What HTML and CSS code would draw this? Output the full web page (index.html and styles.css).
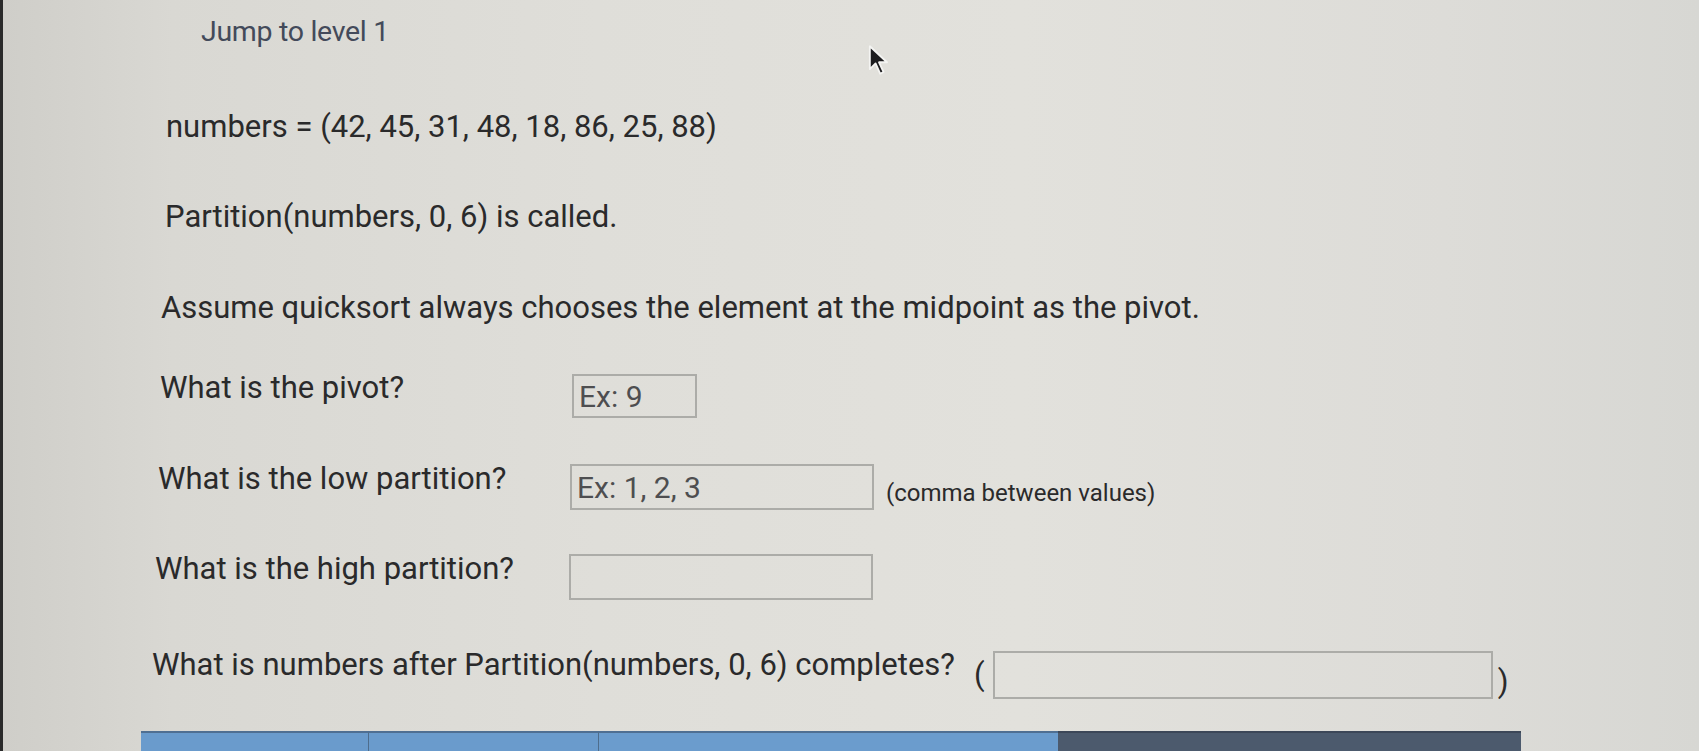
FILE: index.html
```html
<!DOCTYPE html>
<html lang="en">
<head>
<meta charset="utf-8">
<title>Partition</title>
<link rel="stylesheet" href="styles.css">
</head>
<body>
<div class="screen">
  <div class="content">
    <div class="jump">Jump to level 1</div>
    <p class="line l-numbers">numbers = (42, 45, 31, 48, 18, 86, 25, 88)</p>
    <p class="line l-call">Partition(numbers, 0, 6) is called.</p>
    <p class="line l-assume">Assume quicksort always chooses the element at the midpoint as the pivot.</p>

    <div class="q q-pivot">
      <span class="label">What is the pivot?</span>
      <input class="box box-small" type="text" placeholder="Ex: 9">
    </div>
    <div class="q q-low">
      <span class="label">What is the low partition?</span>
      <input class="box box-mid" type="text" placeholder="Ex: 1, 2, 3">
      <span class="hint">(comma between values)</span>
    </div>
    <div class="q q-high">
      <span class="label">What is the high partition?</span>
      <input class="box box-mid" type="text">
    </div>
    <div class="q q-after">
      <span class="label label-wide">What is numbers after Partition(numbers, 0, 6) completes?</span>
      <span class="paren paren-open">(</span>
      <input class="box box-wide" type="text">
      <span class="paren paren-close">)</span>
    </div>
  </div>

  <div class="bar">
    <div class="seg seg-a"></div>
    <div class="seg seg-b"></div>
    <div class="seg seg-c"></div>
    <div class="seg seg-d"></div>
  </div>

  <svg class="cursor" width="24" height="32" viewBox="0 0 20 28">
    <path d="M2 2 L2 22 L7 17 L11 26 L14 24.5 L10 16 L17 16 Z" fill="#1c1c1e" stroke="#f4f4f2" stroke-width="1.6" stroke-linejoin="round"/>
  </svg>
</div>
</body>
</html>
```

FILE: styles.css
```css
* { box-sizing: border-box; }

html, body {
  margin: 0;
  padding: 0;
  width: 1699px;
  height: 751px;
  overflow: hidden;
}

body {
  font-family: Roboto, "Liberation Sans", sans-serif;
  color: #2a2a2b;
}

.screen {
  position: relative;
  width: 1699px;
  height: 751px;
  overflow: hidden;
  background: linear-gradient(90deg, #cfcec9 0%, #d9d8d3 10%, #dfded9 35%, #e2e1dc 60%, #dddcd8 85%, #d7d7d3 100%);
  border-left: 3px solid #2a2a2a;
  display: flex;
  flex-direction: column;
}

.content {
  display: flex;
  flex-direction: column;
  padding-left: 157px;
  padding-top: 12px;
}

.jump {
  height: 40px;
  line-height: 40px;
  font-size: 28.5px;
  color: #434a5a;
  padding-left: 41px;
  letter-spacing: -0.3px;
}

.line {
  margin: 0;
  height: 40px;
  line-height: 40px;
  font-size: 31px;
}

.l-numbers { margin-top: 55px; padding-left: 6px; }
.l-call    { margin-top: 50px; padding-left: 5px; }
.l-assume  { margin-top: 51px; padding-left: 1px; }

.q {
  display: flex;
  align-items: center;
  height: 46px;
  font-size: 31px;
}

.q-pivot { margin-top: 45px; }
.q-low   { margin-top: 45px; margin-left: -2px; }
.q-high  { margin-top: 44px; margin-left: -5px; }
.q-after { margin-top: 50px; margin-left: -8px; height: 50px; }

.label {
  width: 412px;
  flex: none;
  line-height: 40px;
  margin-bottom: 16px;
}

.q-high .label { width: 414px; }

.label-wide {
  width: auto;
  margin-bottom: 20px;
}

.box {
  flex: none;
  height: 44px;
  border: 2px solid #acaca8;
  background: transparent;
  font-family: Roboto, "Liberation Sans", sans-serif;
  font-size: 30px;
  padding: 0 5px;
  color: #333;
  outline: none;
}

.box::placeholder { color: #4e4e50; opacity: 1; }

.box-small { width: 125px; }
.box-mid   { width: 304px; height: 46px; }
.box-wide  { width: 500px; height: 48px; }

.hint {
  font-size: 24px;
  margin-left: 12px;
  margin-top: 12px;
}

.paren {
  font-size: 31px;
  line-height: 40px;
}

.paren-open { margin-left: 19px; margin-right: 8px; }
.paren-close { margin-left: 5px; margin-top: 14px; }

.bar {
  display: flex;
  margin-top: auto;
  margin-left: 138px;
  height: 20px;
  width: 1380px;
}

.seg {
  height: 100%;
  border-top: 2px solid #4f6f92;
}

.seg-a { width: 228px; background: #6a9bcc; border-right: 1px solid #4e6d8c; }
.seg-b { width: 230px; background: #6a9bcc; border-right: 1px solid #4e6d8c; }
.seg-c { width: 459px; background: #6b9ccd; }
.seg-d { flex: 1; background: #4c5a6d; border-top-color: #3c4758; }

.cursor {
  position: absolute;
  left: 864px;
  top: 44px;
}
```
